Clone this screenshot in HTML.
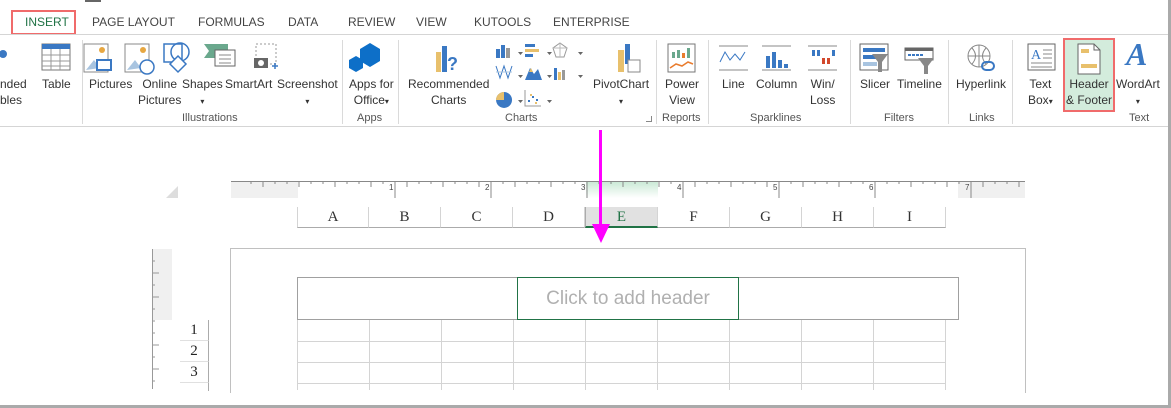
<!DOCTYPE html>
<html><head><meta charset="utf-8"><style>
*{margin:0;padding:0;box-sizing:border-box}
body{width:1171px;height:408px;background:#fff;position:relative;overflow:hidden;font-family:"Liberation Sans",sans-serif;color:#444}
.a{position:absolute}
.tab{position:absolute;top:15px;font-size:12px;color:#444}
.lbl{position:absolute;font-size:12px;color:#333;text-align:center;line-height:16px;white-space:nowrap}
.grp{position:absolute;top:112px;font-size:11px;color:#555;text-align:center}
.sep{position:absolute;top:40px;width:1px;height:84px;background:#dadada}
.col{position:absolute;top:207px;height:21px;border-right:1px solid #d4d4d4;border-bottom:1px solid #ababab;font-family:"Liberation Serif",serif;font-size:15px;text-align:center;line-height:21px;color:#333}
.vl{position:absolute;width:1px;background:#d4d4d4}
.hl{position:absolute;height:1px;background:#d4d4d4}
.rn{position:absolute;left:180px;width:29px;height:21px;border-right:1px solid #ababab;border-bottom:1px solid #e0e0e0;font-family:"Liberation Serif",serif;font-size:15px;text-align:center;line-height:21px;color:#222}
</style></head><body>
<div class="a" style="left:85px;top:0;width:16px;height:2px;background:#666"></div>
<div class="a" style="left:11px;top:10px;width:65px;height:25px;border:2px solid #f06b6b"></div>
<div class="tab" style="left:25px;color:#217346">INSERT</div>
<div class="tab" style="left:92px">PAGE LAYOUT</div>
<div class="tab" style="left:198px">FORMULAS</div>
<div class="tab" style="left:288px">DATA</div>
<div class="tab" style="left:348px">REVIEW</div>
<div class="tab" style="left:416px">VIEW</div>
<div class="tab" style="left:474px">KUTOOLS</div>
<div class="tab" style="left:553px">ENTERPRISE</div>
<div class="a" style="left:0;top:34px;width:1168px;height:1px;background:#d5d5d5"></div>
<div class="a" style="left:0;top:126px;width:1168px;height:1px;background:#d5d5d5"></div>
<div class="sep" style="left:82px"></div><div class="sep" style="left:342px"></div><div class="sep" style="left:398px"></div><div class="sep" style="left:656px"></div><div class="sep" style="left:708px"></div><div class="sep" style="left:850px"></div><div class="sep" style="left:948px"></div><div class="sep" style="left:1012px"></div>
<svg class="a" style="left:0;top:40px" width="1168" height="70">
<circle cx="3" cy="14" r="4" fill="#3a78c3"/>
<rect x="42" y="4" width="28" height="26" fill="#fff" stroke="#777"/><rect x="42" y="4" width="28" height="5" fill="#3a78c3"/><path d="M42 15h28M42 21h28M42 26h28M51 9v21M60 9v21" stroke="#999"/>
<rect x="84" y="4" width="24" height="28" fill="#fff" stroke="#888"/><circle cx="102" cy="10" r="3" fill="#e7a741"/><path d="M86 30l8-10 6 8z" fill="#a8c4e0"/><rect x="97" y="20" width="14" height="10" fill="#fff" stroke="#3a78c3" stroke-width="2"/>
<rect x="125" y="4" width="24" height="28" fill="#fff" stroke="#888"/><circle cx="143" cy="10" r="3" fill="#e7a741"/><path d="M127 30l8-10 6 8z" fill="#a8c4e0"/><circle cx="147" cy="27" r="7" fill="#fff" stroke="#3a78c3" stroke-width="1.5"/>
<rect x="164" y="4" width="18" height="18" fill="none" stroke="#3a78c3" stroke-width="1.5"/><circle cx="180" cy="12" r="9" fill="none" stroke="#3a78c3" stroke-width="1.5"/><path d="M178 16l8 8-8 8-8-8z" fill="#fff" stroke="#3a78c3" stroke-width="1.5"/>
<path d="M204 4h24v14h-24l5-7z" fill="#6aa88d"/><rect x="215" y="10" width="20" height="16" fill="#fff" stroke="#666"/><path d="M219 15h12M219 19h12M219 23h12" stroke="#888"/>
<rect x="256" y="4" width="20" height="20" fill="none" stroke="#999" stroke-dasharray="2 2"/><rect x="254" y="18" width="14" height="10" fill="#666"/><circle cx="261" cy="23" r="3" fill="#fff"/><path d="M272 26h6M275 23v6" stroke="#3a78c3" stroke-width="1.5"/>
<path d="M370 3l10 6v12l-10 6-10-6V9z" fill="#0d6fc8"/><path d="M356 16l7 4v8l-7 4-7-4v-8z" fill="#0d6fc8"/>
<rect x="436" y="12" width="5" height="20" fill="#e8c06c"/><rect x="442" y="6" width="5" height="26" fill="#3a78c3"/><text x="447" y="30" font-size="18" font-weight="bold" fill="#3a78c3" font-family="Liberation Sans">?</text>
<g transform="translate(64,2)">
<rect x="432" y="7" width="4" height="9" fill="#3a78c3"/><rect x="437" y="3" width="4" height="13" fill="#3a78c3"/><rect x="442" y="6" width="4" height="10" fill="#999"/>
<rect x="461" y="2" width="10" height="3" fill="#3a78c3"/><rect x="461" y="7" width="14" height="3" fill="#e8c06c"/><rect x="461" y="12" width="8" height="3" fill="#3a78c3"/>
<path d="M496 1l7 5-3 9h-8l-3-9z" fill="none" stroke="#999"/><path d="M489 6h14M496 1v14" stroke="#bbb"/>
<path d="M432 24l4 12 4-12 4 12 4-12" fill="none" stroke="#3a78c3"/><path d="M432 30h16" stroke="#a8c4e0"/>
<path d="M461 38l5-12 4 6 4-5 4 11z" fill="#3a78c3"/><path d="M465 30l2-4 2 4z" fill="#e8c06c"/>
<rect x="490" y="26" width="3" height="12" fill="#3a78c3"/><rect x="494" y="30" width="3" height="8" fill="#e8c06c"/><rect x="498" y="28" width="3" height="10" fill="#999"/>
<g transform="translate(0,2)">
<path d="M440 48a8 8 0 1 0 0.1 0z" fill="#3a78c3"/><path d="M440 56v-8a8 8 0 0 0-8 8z" fill="#e8c06c"/>
<path d="M461 46v16h16" fill="none" stroke="#999"/><g fill="#3a78c3"><rect x="464" y="56" width="2" height="2"/><rect x="468" y="52" width="2" height="2"/><rect x="472" y="55" width="2" height="2"/></g><g fill="#e8c06c"><rect x="466" y="50" width="2" height="2"/><rect x="471" y="58" width="2" height="2"/></g>
</g></g>
<g fill="#666" transform="translate(68,2)"><path d="M450 10h5l-2.5 3z"/><path d="M479 10h5l-2.5 3z"/><path d="M510 10h5l-2.5 3z"/><path d="M450 33h5l-2.5 3z"/><path d="M479 33h5l-2.5 3z"/><path d="M510 33h5l-2.5 3z"/><path d="M450 58h5l-2.5 3z"/><path d="M479 58h5l-2.5 3z"/></g>
<rect x="618" y="10" width="6" height="22" fill="#e8c06c"/><rect x="625" y="4" width="5" height="20" fill="#3a78c3"/><rect x="628" y="20" width="12" height="12" fill="#fff" stroke="#888"/>
<rect x="668" y="4" width="27" height="28" fill="#fff" stroke="#777"/><rect x="672" y="12" width="3" height="6" fill="#6aa88d"/><rect x="677" y="10" width="3" height="8" fill="#6aa88d"/><rect x="682" y="13" width="3" height="5" fill="#e97c2e"/><rect x="687" y="8" width="3" height="10" fill="#6aa88d"/><path d="M670 28l6-4 6 2 6-4 5 2" fill="none" stroke="#e97c2e" stroke-width="1.5"/>
<path d="M719 6h29M719 30h29" stroke="#888"/><path d="M720 22l5-10 5 8 5-6 5 6 5-8" fill="none" stroke="#3a78c3"/>
<path d="M762 6h29M762 30h29" stroke="#888"/><rect x="766" y="16" width="4" height="12" fill="#3a78c3"/><rect x="772" y="12" width="4" height="16" fill="#3a78c3"/><rect x="778" y="20" width="4" height="8" fill="#3a78c3"/><rect x="784" y="24" width="4" height="4" fill="#3a78c3"/>
<path d="M808 6h29M808 30h29" stroke="#888"/><rect x="812" y="10" width="3" height="6" fill="#3a78c3"/><rect x="817" y="10" width="3" height="6" fill="#3a78c3"/><rect x="822" y="18" width="3" height="6" fill="#d2482c"/><rect x="827" y="18" width="3" height="6" fill="#d2482c"/><rect x="832" y="10" width="3" height="6" fill="#3a78c3"/>
<rect x="860" y="4" width="28" height="26" fill="#fff" stroke="#666"/><rect x="863" y="8" width="22" height="4" fill="#3a78c3"/><rect x="863" y="15" width="14" height="4" fill="#3a78c3"/><rect x="863" y="22" width="14" height="4" fill="#a8c4e0"/><path d="M872 14h16l-6 8v10h-4V22z" fill="#888"/>
<rect x="905" y="8" width="28" height="12" fill="#fff" stroke="#666"/><rect x="905" y="8" width="28" height="3" fill="#666"/><path d="M908 15h16" stroke="#3a78c3" stroke-width="2" stroke-dasharray="3 1"/><path d="M918 18h16l-6 8v8h-4v-8z" fill="#888"/>
<circle cx="979" cy="16" r="11" fill="none" stroke="#888"/><path d="M968 16h22M979 5v22M972 8q7 8 0 16M986 8q-7 8 0 16" fill="none" stroke="#888"/><rect x="982" y="22" width="12" height="8" rx="4" fill="none" stroke="#3a78c3" stroke-width="2"/>
<rect x="1028" y="4" width="27" height="26" fill="#fff" stroke="#666"/><text x="1031" y="19" font-size="14" fill="#3a78c3" font-family="Liberation Serif">A</text><path d="M1043 10h9M1043 14h9M1043 18h9M1031 23h21M1031 27h21" stroke="#888"/>
</svg>
<div class="a" style="left:1063px;top:38px;width:52px;height:74px;background:#d3ecdc;border:2px solid #f06b6b"></div>
<svg class="a" style="left:1070px;top:42px" width="40" height="36"><path d="M8 2h16l6 6v24H8z" fill="#fff" stroke="#666"/><path d="M24 2v6h6" fill="none" stroke="#666"/><rect x="11" y="7" width="8" height="4" fill="#e8c06c"/><rect x="11" y="22" width="16" height="4" fill="#e8c06c"/></svg>
<div class="a" style="left:1126px;top:36px;font:italic bold 32px 'Liberation Serif',serif;color:#3a78c3">A</div>
<div class="lbl" style="left:0;top:76px;text-align:left">nded<br>bles</div>
<div class="lbl" style="left:42px;top:76px">Table</div>
<div class="lbl" style="left:89px;top:76px">Pictures</div>
<div class="lbl" style="left:138px;top:76px">Online<br>Pictures</div>
<div class="lbl" style="left:182px;top:76px">Shapes<br><span style="font-size:8px">▾</span></div>
<div class="lbl" style="left:225px;top:76px">SmartArt</div>
<div class="lbl" style="left:277px;top:76px">Screenshot<br><span style="font-size:8px">▾</span></div>
<div class="lbl" style="left:349px;top:76px">Apps for<br>Office<span style="font-size:8px">▾</span></div>
<div class="lbl" style="left:408px;top:76px">Recommended<br>Charts</div>
<div class="lbl" style="left:593px;top:76px">PivotChart<br><span style="font-size:8px">▾</span></div>
<div class="lbl" style="left:665px;top:76px">Power<br>View</div>
<div class="lbl" style="left:722px;top:76px">Line</div>
<div class="lbl" style="left:756px;top:76px">Column</div>
<div class="lbl" style="left:810px;top:76px">Win/<br>Loss</div>
<div class="lbl" style="left:860px;top:76px">Slicer</div>
<div class="lbl" style="left:897px;top:76px">Timeline</div>
<div class="lbl" style="left:956px;top:76px">Hyperlink</div>
<div class="lbl" style="left:1028px;top:76px">Text<br>Box<span style="font-size:8px">▾</span></div>
<div class="lbl" style="left:1065px;top:76px;width:48px">Header<br>&amp; Footer</div>
<div class="lbl" style="left:1116px;top:76px">WordArt<br><span style="font-size:8px">▾</span></div>
<div class="a" style="left:646px;top:116px;width:6px;height:6px;border:1px solid #888;border-top:none;border-left:none"></div>
<div class="grp" style="left:182px">Illustrations</div>
<div class="grp" style="left:357px">Apps</div>
<div class="grp" style="left:505px">Charts</div>
<div class="grp" style="left:662px">Reports</div>
<div class="grp" style="left:750px">Sparklines</div>
<div class="grp" style="left:884px">Filters</div>
<div class="grp" style="left:969px">Links</div>
<div class="grp" style="left:1129px">Text</div>
<div class="a" style="left:231px;top:181px;width:67px;height:17px;background:#f0f0f0"></div>
<div class="a" style="left:958px;top:181px;width:67px;height:17px;background:#f0f0f0"></div>
<div class="a" style="left:586px;top:181px;width:72px;height:17px;background:linear-gradient(#c8e8d4,#fff)"></div>
<svg class="a" style="left:231px;top:181px" width="794" height="17">
<g stroke="#888">
<path d="M0 .5h794"/>
<path d="M20 0v3M32 0v6M44 0v3M56 0v3M68 0v6M80 0v3M92 0v3M104 0v6M116 0v3M128 0v3M140 0v6M152 0v3M164 0v3M176 0v6M188 0v3M200 0v3M212 0v6M224 0v3M236 0v3M248 0v6M260 0v3M272 0v3M284 0v6M296 0v3M308 0v3M320 0v6M332 0v3M344 0v3M356 0v6M368 0v3M380 0v3M392 0v6M404 0v3M416 0v3M428 0v6M440 0v3M452 0v3M464 0v6M476 0v3M488 0v3M500 0v6M512 0v3M524 0v3M536 0v6M548 0v3M560 0v3M572 0v6M584 0v3M596 0v3M608 0v6M620 0v3M632 0v3M644 0v6M656 0v3M668 0v3M680 0v6M692 0v3M704 0v3M716 0v6M728 0v3M740 0v3M752 0v6M764 0v3M776 0v3M788 0v6"/>
<path d="M164 0v17M260 0v17M356 0v17M452 0v17M548 0v17M644 0v17M740 0v17"/>
</g>
<g font-size="8" fill="#444" font-family="Liberation Sans"><text x="158" y="9">1</text><text x="254" y="9">2</text><text x="350" y="9">3</text><text x="446" y="9">4</text><text x="542" y="9">5</text><text x="638" y="9">6</text><text x="734" y="9">7</text></g>
</svg>
<svg class="a" style="left:164px;top:185px" width="16" height="14"><path d="M14 1v12H2z" fill="#ddd"/></svg>
<div class="col" style="left:297px;width:72px;border-left:1px solid #d4d4d4">A</div>
<div class="col" style="left:369px;width:72px">B</div>
<div class="col" style="left:441px;width:72px">C</div>
<div class="col" style="left:513px;width:72px">D</div>
<div class="col" style="left:585px;width:73px;background:#e1e1e1;border-bottom:2px solid #217346;color:#217346;border-left:1px solid #ababab">E</div>
<div class="col" style="left:658px;width:72px">F</div>
<div class="col" style="left:730px;width:72px">G</div>
<div class="col" style="left:802px;width:72px">H</div>
<div class="col" style="left:874px;width:72px">I</div>
<div class="a" style="left:230px;top:248px;width:796px;height:145px;border:1px solid #c0c0c0;border-bottom:none"></div>
<div class="a" style="left:152px;top:249px;width:20px;height:71px;background:#f0f0f0"></div>
<div class="a" style="left:152px;top:249px;width:1px;height:140px;background:#999"></div>
<svg class="a" style="left:152px;top:249px" width="10" height="140"><g stroke="#999"><path d="M0 12h3M0 24h7M0 36h3M0 48h7M0 60h3M0 72h3M0 84h3M0 96h7M0 108h3M0 120h7M0 132h3"/></g></svg>
<div class="hl" style="left:297px;top:341px;width:649px"></div>
<div class="hl" style="left:297px;top:362px;width:649px"></div>
<div class="hl" style="left:297px;top:383px;width:649px"></div>
<div class="vl" style="left:297px;top:320px;height:70px"></div>
<div class="vl" style="left:369px;top:320px;height:70px"></div>
<div class="vl" style="left:441px;top:320px;height:70px"></div>
<div class="vl" style="left:513px;top:320px;height:70px"></div>
<div class="vl" style="left:585px;top:320px;height:70px"></div>
<div class="vl" style="left:657px;top:320px;height:70px"></div>
<div class="vl" style="left:729px;top:320px;height:70px"></div>
<div class="vl" style="left:801px;top:320px;height:70px"></div>
<div class="vl" style="left:873px;top:320px;height:70px"></div>
<div class="vl" style="left:945px;top:320px;height:70px"></div>
<div class="a" style="left:297px;top:277px;width:662px;height:43px;border:1px solid #a0a0a0"></div>
<div class="a" style="left:517px;top:277px;width:222px;height:43px;border:1px solid #217346;font-size:19px;color:#b0b0b0;text-align:center;line-height:42px">Click to add header</div>
<div class="rn" style="top:320px">1</div>
<div class="rn" style="top:341px">2</div>
<div class="rn" style="top:362px">3</div>
<div class="a" style="left:208px;top:383px;width:1px;height:8px;background:#ababab"></div>
<div class="a" style="left:599px;top:130px;width:3px;height:98px;background:#f0f"></div>
<svg class="a" style="left:592px;top:224px" width="18" height="20"><path d="M0 0h18L9 19z" fill="#f0f"/></svg>
<div class="a" style="left:1168px;top:0;width:3px;height:408px;background:#aaa"></div>
<div class="a" style="left:0;top:405px;width:1171px;height:3px;background:#aaa"></div>
</body></html>
